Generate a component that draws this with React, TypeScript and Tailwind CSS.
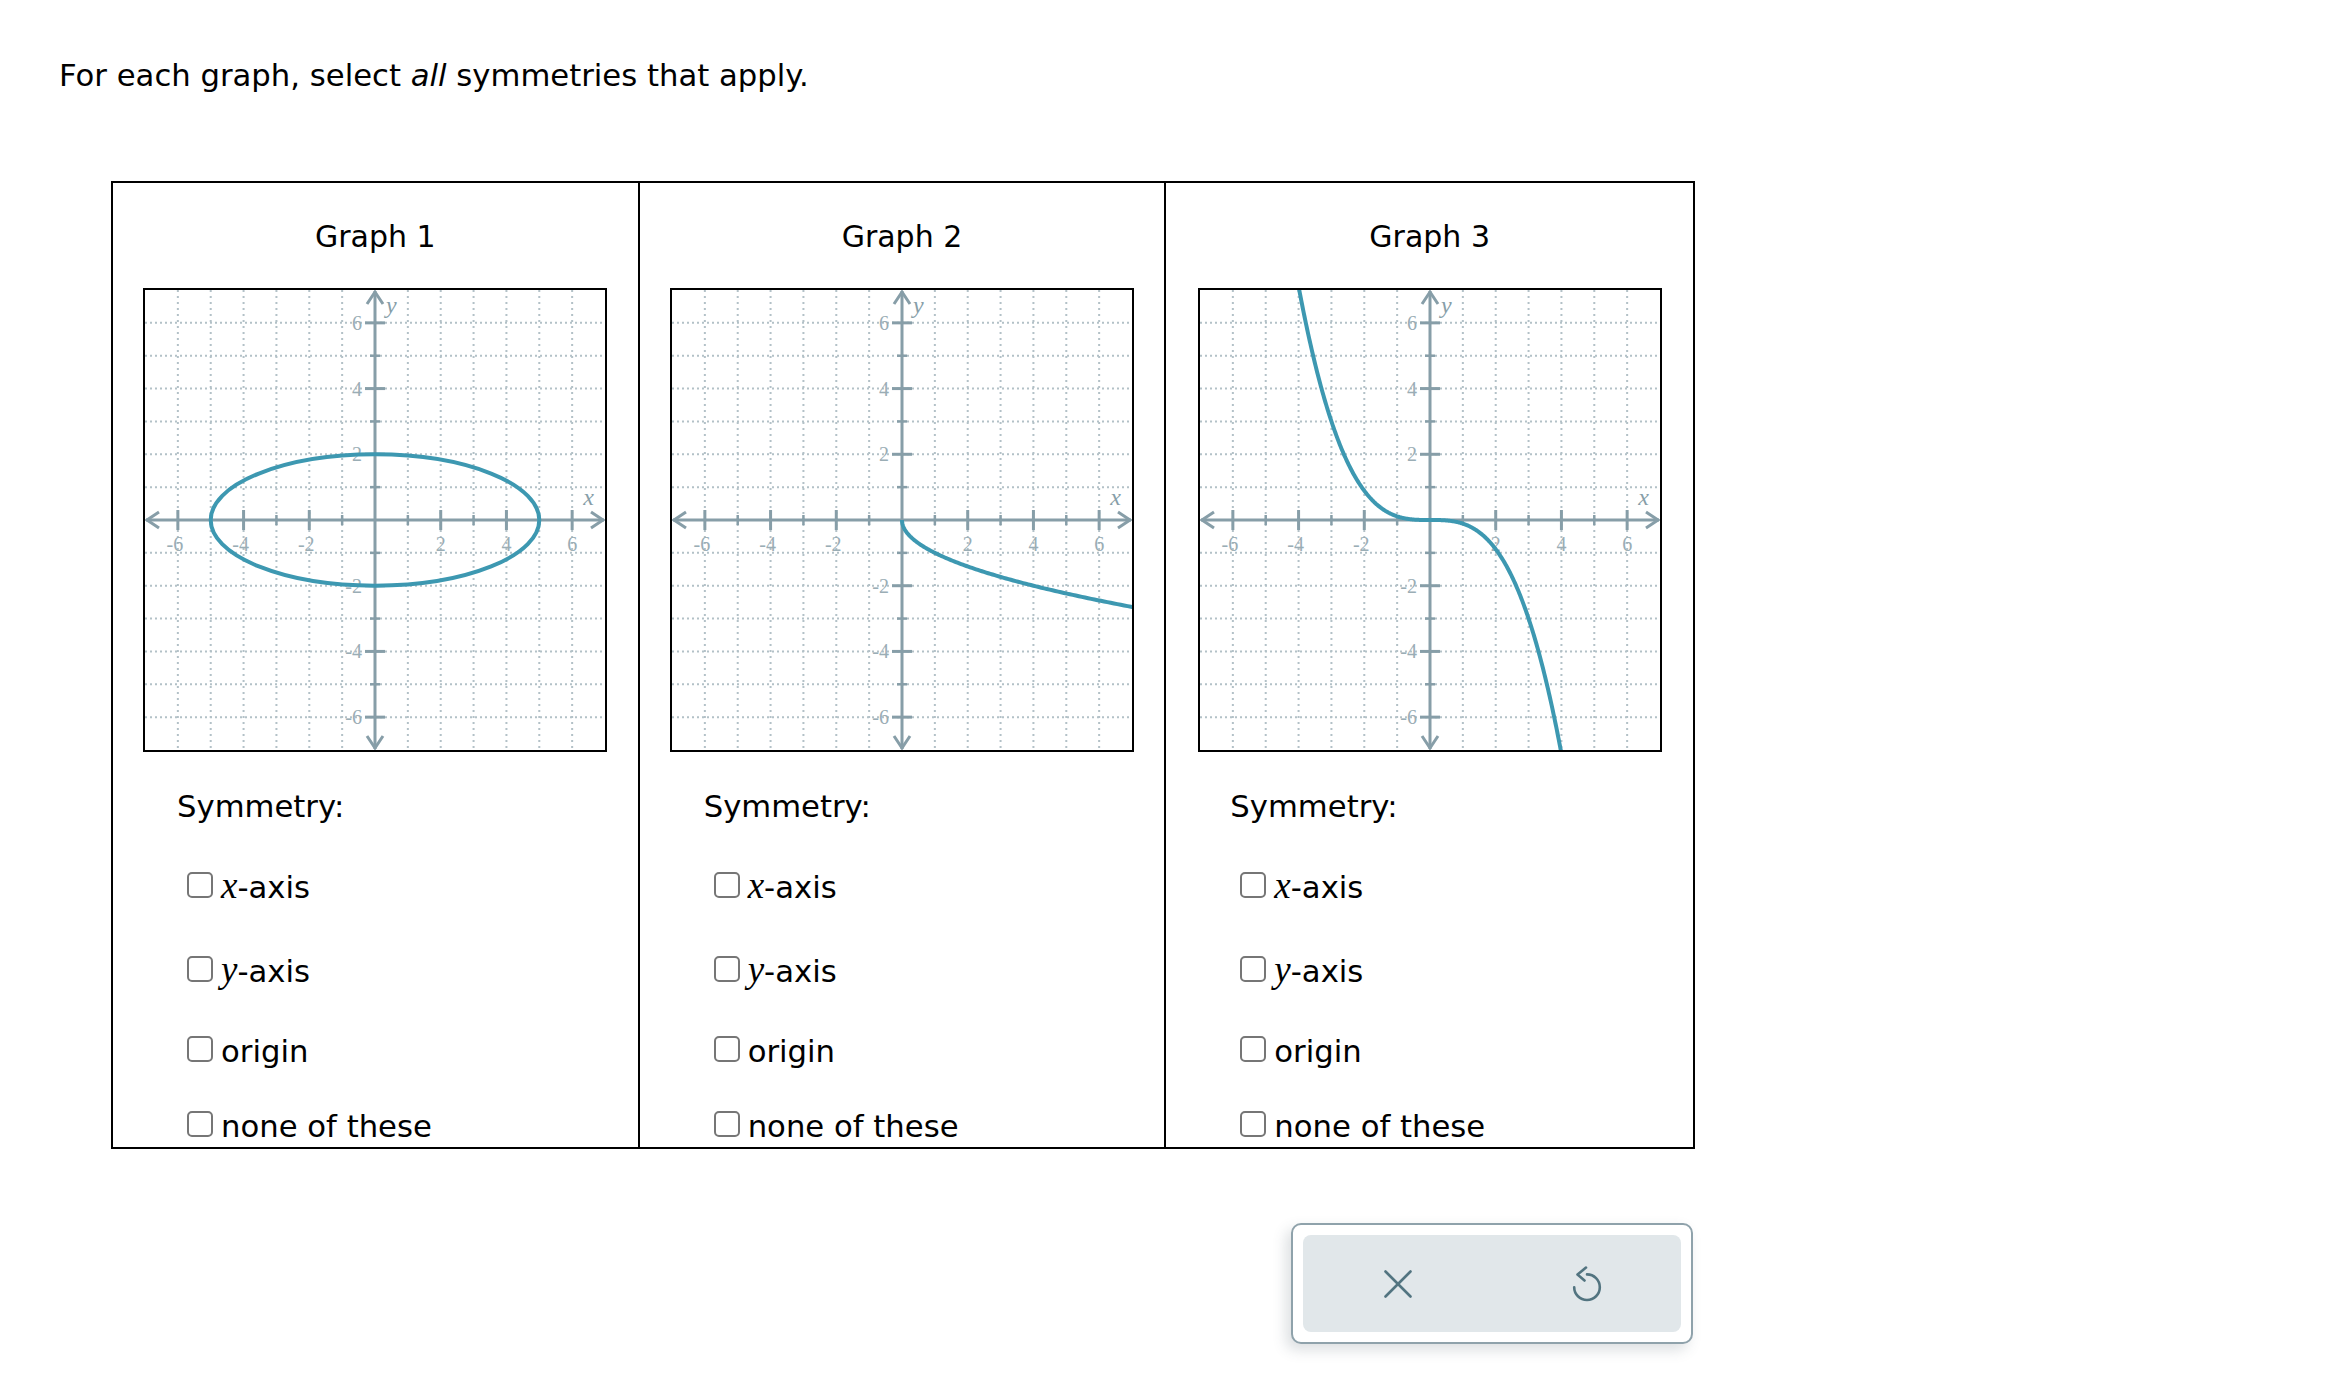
import React from "react";

const U = 460 / 14;
const X = (x: number) => 230 + x * U;
const Y = (y: number) => 230 - y * U;

const AXIS = "#879ea8";
const GRID = "#b3c1c7";
const LABEL = "#9aadb5";
const CURVE = "#3d98b1";

function buildPath(pts: [number, number][]) {
  return pts
    .map((p, i) => `${i === 0 ? "M" : "L"}${X(p[0]).toFixed(2)} ${Y(p[1]).toFixed(2)}`)
    .join(" ");
}

const graph2Pts: [number, number][] = [];
for (let t = 0; t <= Math.sqrt(7.2) + 1e-9; t += 0.02) {
  const x = t * t;
  graph2Pts.push([x, -Math.sqrt(x)]);
}
const graph3Pts: [number, number][] = [];
for (let x = -4.2; x <= 4.2 + 1e-9; x += 0.02) {
  graph3Pts.push([x, -(x * x * x) / 9]);
}

function Plane({ children }: { children: React.ReactNode }) {
  const ints = [-6, -5, -4, -3, -2, -1, 1, 2, 3, 4, 5, 6];
  return (
    <svg width={460} height={460} viewBox="0 0 460 460" className="block">
      {ints.map((i) => (
        <line
          key={"v" + i}
          x1={X(i)}
          y1={0}
          x2={X(i)}
          y2={460}
          stroke={GRID}
          strokeWidth={2}
          strokeDasharray="2 4"
        />
      ))}
      {ints.map((i) => (
        <line
          key={"h" + i}
          x1={0}
          y1={Y(i)}
          x2={460}
          y2={Y(i)}
          stroke={GRID}
          strokeWidth={2}
          strokeDasharray="2 3"
        />
      ))}
      <line x1={1} y1={Y(0)} x2={459} y2={Y(0)} stroke={AXIS} strokeWidth={3} />
      <line x1={X(0)} y1={1} x2={X(0)} y2={459} stroke={AXIS} strokeWidth={3} />
      <polyline points={`14,${Y(0) - 8} 2,${Y(0)} 14,${Y(0) + 8}`} fill="none" stroke={AXIS} strokeWidth={3} />
      <polyline points={`446,${Y(0) - 8} 458,${Y(0)} 446,${Y(0) + 8}`} fill="none" stroke={AXIS} strokeWidth={3} />
      <polyline points={`${X(0) - 8},14 ${X(0)},2 ${X(0) + 8},14`} fill="none" stroke={AXIS} strokeWidth={3} />
      <polyline points={`${X(0) - 8},446 ${X(0)},458 ${X(0) + 8},446`} fill="none" stroke={AXIS} strokeWidth={3} />
      {ints.map((i) => {
        const even = i % 2 === 0;
        const l = even ? 10 : 5;
        return (
          <g key={"t" + i}>
            <line x1={X(i)} y1={Y(0) - l} x2={X(i)} y2={Y(0) + l} stroke={AXIS} strokeWidth={even ? 3 : 2.5} />
            <line x1={X(0) - l} y1={Y(i)} x2={X(0) + l} y2={Y(i)} stroke={AXIS} strokeWidth={even ? 3 : 2.5} />
          </g>
        );
      })}
      {[-6, -4, -2, 2, 4, 6].map((i) => (
        <g key={"l" + i} fill={LABEL} style={{ fontFamily: '"Liberation Serif", serif', fontSize: 20 }}>
          <text x={X(i) - (i < 0 ? 3 : 0)} y={Y(0) + 31} textAnchor="middle">
            {i}
          </text>
          <text x={X(0) - 13} y={Y(i) + 7} textAnchor="end">
            {i}
          </text>
        </g>
      ))}
      <text
        x={X(6.5)}
        y={Y(0) - 15}
        textAnchor="middle"
        fill={AXIS}
        style={{ fontFamily: '"Liberation Serif", serif', fontSize: 24, fontStyle: "italic" }}
      >
        x
      </text>
      <text
        x={X(0) + 11}
        y={23}
        fill={AXIS}
        style={{ fontFamily: '"Liberation Serif", serif', fontSize: 24, fontStyle: "italic" }}
      >
        y
      </text>
      {children}
    </svg>
  );
}

function Var({ v }: { v: string }) {
  return (
    <span className="italic text-[37px] leading-[0]" style={{ fontFamily: '"Liberation Serif", "Times New Roman", serif' }}>
      {v}
    </span>
  );
}

function Checkbox() {
  return <span className="block w-[26px] h-[26px] shrink-0 border-2 border-[#767676] rounded-[5px] bg-white mr-[8px] mb-[1px]" />;
}

function Cell({ title, graph, last }: { title: string; graph: React.ReactNode; last?: boolean }) {
  return (
    <div className={"flex flex-col pt-[36px] pb-[3px] " + (last ? "" : "border-r-2 border-black")}>
      <div className="text-center text-[30px] leading-[35px]">{title}</div>
      <div className="mt-[34px] mx-auto w-[464px] h-[464px] border-2 border-black">{graph}</div>
      <div className="mt-[37px] pl-[64px] leading-[35px]">Symmetry:</div>
      <div className="pl-[74px] leading-[35px]">
        <div className="mt-[46px] flex items-baseline">
          <Checkbox />
          <span>
            <Var v="x" />
            -axis
          </span>
        </div>
        <div className="mt-[49px] flex items-baseline">
          <Checkbox />
          <span>
            <Var v="y" />
            -axis
          </span>
        </div>
        <div className="mt-[45px] flex items-baseline">
          <Checkbox />
          <span>origin</span>
        </div>
        <div className="mt-[40px] flex items-baseline">
          <Checkbox />
          <span>none of these</span>
        </div>
      </div>
    </div>
  );
}

export default function App() {
  return (
    <div
      className="min-h-screen w-full bg-white text-black text-[30.7px] pt-[58px]"
      style={{ fontFamily: '"DejaVu Sans", Verdana, sans-serif' }}
    >
      <p className="ml-[59px] leading-[35px]">
        For each graph, select <i>all</i> symmetries that apply.
      </p>
      <div className="ml-[111px] mt-[88px] w-[1584px] border-2 border-black grid grid-cols-3">
        <Cell
          title="Graph 1"
          graph={
            <Plane>
              <ellipse cx={X(0)} cy={Y(0)} rx={5 * U} ry={2 * U} fill="none" stroke={CURVE} strokeWidth={4} />
            </Plane>
          }
        />
        <Cell
          title="Graph 2"
          graph={
            <Plane>
              <path d={buildPath(graph2Pts)} fill="none" stroke={CURVE} strokeWidth={4} />
            </Plane>
          }
        />
        <Cell
          title="Graph 3"
          last
          graph={
            <Plane>
              <path d={buildPath(graph3Pts)} fill="none" stroke={CURVE} strokeWidth={4} />
            </Plane>
          }
        />
      </div>
      <div className="ml-[111px] w-[1584px] mt-[74px] flex justify-end">
        <div className="mr-[2px] w-[402px] h-[121px] border-2 border-[#8fa2ab] rounded-[10px] p-[10px] bg-white shadow-[-5px_6px_14px_rgba(60,80,90,0.18)]">
          <div className="w-full h-full bg-[#e1e7ea] rounded-[8px] flex">
            <div className="flex-1 flex items-center justify-center">
              <svg width={28} height={28} viewBox="0 0 28 28" fill="none" stroke="#527480" strokeWidth={2.6} strokeLinecap="round">
                <line x1={1.5} y1={1.5} x2={26.5} y2={26.5} />
                <line x1={26.5} y1={1.5} x2={1.5} y2={26.5} />
              </svg>
            </div>
            <div className="flex-1 flex items-center justify-center">
              <svg width={40} height={40} viewBox="0 0 40 40" fill="none" stroke="#527480" strokeWidth={2.6} strokeLinecap="round" strokeLinejoin="round">
                <path d="M20 10.4 A12.8 12.8 0 1 1 7.2 23.2" />
                <path d="M19 3.6 L10.5 10.6 L17.5 16.5" />
              </svg>
            </div>
          </div>
        </div>
      </div>
    </div>
  );
}
